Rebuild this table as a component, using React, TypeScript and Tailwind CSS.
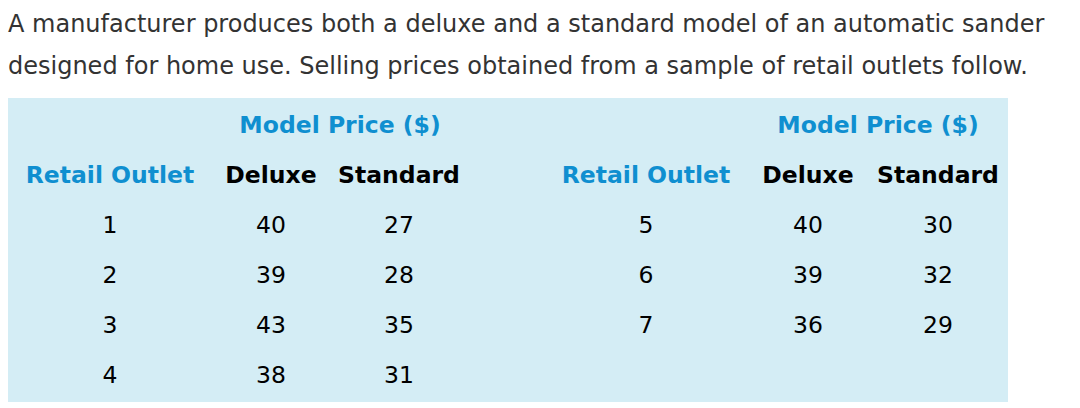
import React from "react";

const left = [
  ["1", "40", "27"],
  ["2", "39", "28"],
  ["3", "43", "35"],
  ["4", "38", "31"],
];
const right = [
  ["5", "40", "30"],
  ["6", "39", "32"],
  ["7", "36", "29"],
];

function Table({ rows, cols }: { rows: string[][]; cols: string }) {
  return (
    <div className={`grid ${cols} auto-rows-[50px] items-center text-center`}>
      <div />
      <div className="col-span-2 font-bold text-[#0f8fd0]">Model Price ($)</div>
      <div className="font-bold text-[#0f8fd0]">Retail Outlet</div>
      <div className="font-bold text-black">Deluxe</div>
      <div className="font-bold text-black">Standard</div>
      {rows.map((r, i) => (
        <React.Fragment key={i}>
          <div>{r[0]}</div>
          <div>{r[1]}</div>
          <div>{r[2]}</div>
        </React.Fragment>
      ))}
    </div>
  );
}

export default function App() {
  return (
    <div
      className="w-[1080px] h-[408px] bg-white px-[8px] pt-[3px] text-[#333333]"
      style={{ fontFamily: '"DejaVu Sans", Verdana, sans-serif' }}
    >
      <p className="leading-[42px] m-0 text-[24px]">
        A manufacturer produces both a deluxe and a standard model of an automatic sander designed for home use. Selling prices obtained from a sample of retail outlets follow.
      </p>
      <div className="mt-[11px] w-[1000px] bg-[#d4edf5] py-[2px] flex gap-[76px] text-black text-[23.5px] leading-[28px]">
        <Table rows={left} cols="grid-cols-[204px_118px_138px]" />
        <Table rows={right} cols="grid-cols-[204px_120px_140px]" />
      </div>
    </div>
  );
}
